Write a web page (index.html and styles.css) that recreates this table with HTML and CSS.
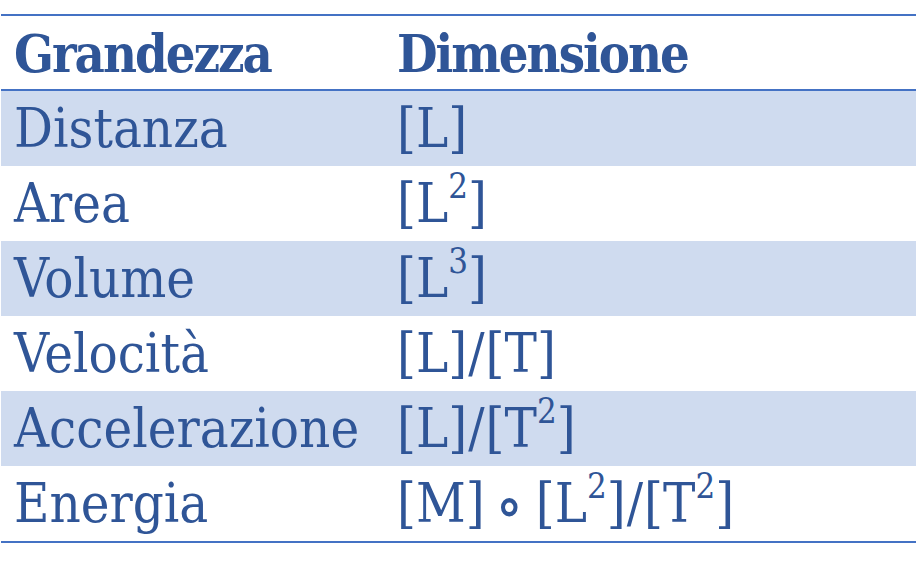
FILE: index.html
```html
<!DOCTYPE html>
<html lang="it">
<head>
<meta charset="utf-8">
<link rel="stylesheet" href="styles.css">
</head>
<body>
<div class="dims">
  <div class="row head"><div class="cell c1">Grandezza</div><div class="cell">Dimensione</div></div>
  <div class="row band"><div class="cell c1">Distanza</div><div class="cell">[L]</div></div>
  <div class="row"><div class="cell c1">Area</div><div class="cell">[L<sup>2</sup>]</div></div>
  <div class="row band"><div class="cell c1">Volume</div><div class="cell">[L<sup>3</sup>]</div></div>
  <div class="row"><div class="cell c1">Velocità</div><div class="cell">[L]<span class="sl">/</span>[T]</div></div>
  <div class="row band"><div class="cell c1">Accelerazione</div><div class="cell">[L]<span class="sl">/</span>[T<sup>2</sup>]</div></div>
  <div class="row"><div class="cell c1">Energia</div><div class="cell">[M]<span class="op">∘</span>[L<sup>2</sup>]<span class="sl">/</span>[T<sup>2</sup>]</div></div>
</div>
</body>
</html>
```
FILE: styles.css
```css
html, body {
  margin: 0;
  padding: 0;
  background: #ffffff;
}
body {
  width: 917px;
  height: 575px;
  overflow: hidden;
}
.dims {
  margin: 14px 0 0 1px;
  width: 915px;
  font-family: "DejaVu Serif Condensed", "DejaVu Serif", serif;
  font-stretch: condensed;
  font-size: 54px;
  color: #2f5597;
  border-top: 2px solid #4472c4;
  border-bottom: 2px solid #4472c4;
}
.row {
  display: grid;
  grid-template-columns: 383px 1fr;
  height: 75px;
  box-sizing: border-box;
}
.cell {
  padding: 11px 0 0 13px;
  line-height: 54px;
  white-space: nowrap;
}
.head {
  height: 75px;
  border-bottom: 2px solid #4472c4;
  font-weight: bold;
  font-size: 52px;
  letter-spacing: -2px;
}
.head .cell {
  padding-top: 11px;
}
.band {
  background: #cfdbef;
}
sup {
  font-size: 0.64em;
  line-height: 0;
  vertical-align: 0;
  position: relative;
  top: -0.7em;
}
.sl {
  margin: 0 1px;
}
.op {
  font-size: 1.22em;
  line-height: 0;
  margin: 0 12px 0 10px;
  position: relative;
  top: 6px;
}
```
